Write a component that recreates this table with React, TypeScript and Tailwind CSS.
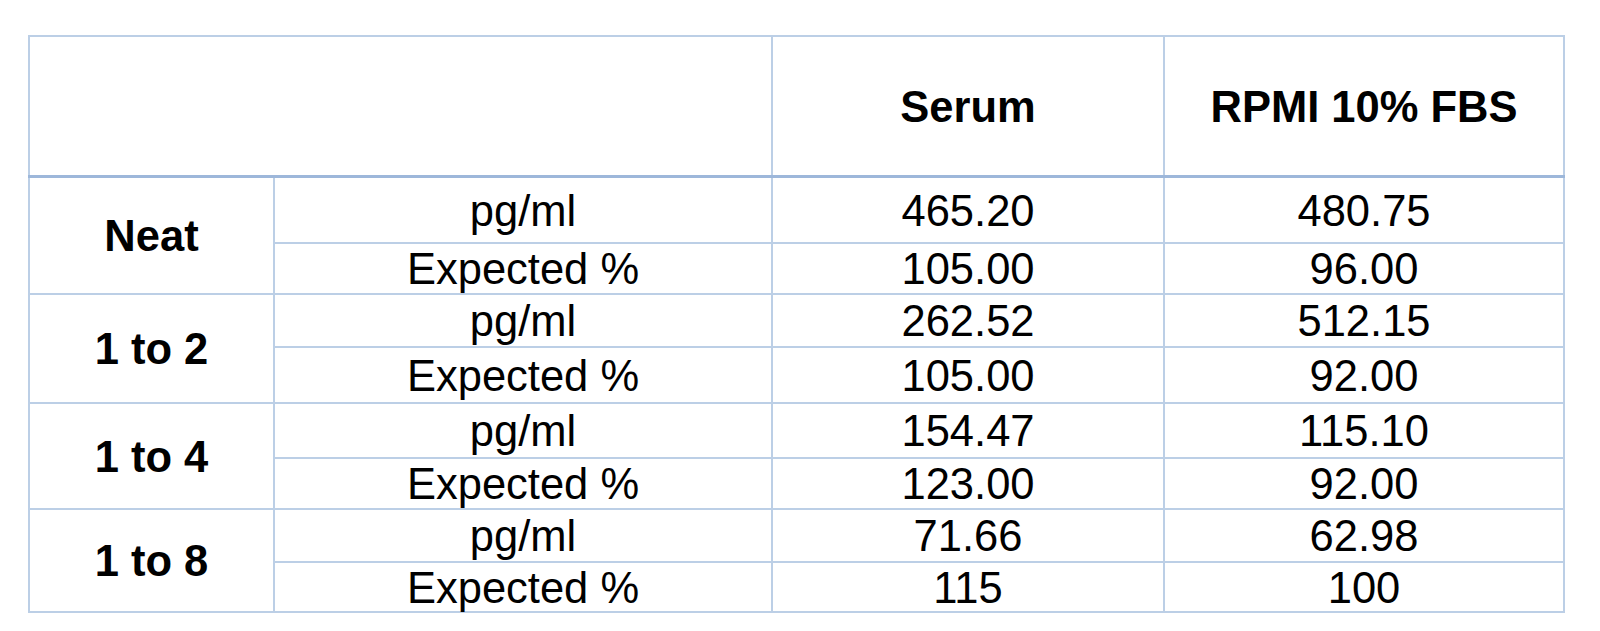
const rows = [
  { label: 'Neat', items: [['pg/ml', '465.20', '480.75', 67], ['Expected %', '105.00', '96.00', 51]] },
  { label: '1 to 2', items: [['pg/ml', '262.52', '512.15', 53], ['Expected %', '105.00', '92.00', 56]] },
  { label: '1 to 4', items: [['pg/ml', '154.47', '115.10', 55], ['Expected %', '123.00', '92.00', 51]] },
  { label: '1 to 8', items: [['pg/ml', '71.66', '62.98', 53], ['Expected %', '115', '100', 50]] },
] as const;

const cell = 'border-2 border-[#bccfe6] text-center align-middle p-0 pt-[3px] leading-none';

export default function App() {
  return (
    <div className="w-[1600px] h-[631px] bg-white pl-[28px] pt-[35px] font-['Liberation_Sans',Arial,sans-serif] text-[43.5px] text-black">
      <table className="table-fixed border-collapse w-[1535px]">
        <colgroup>
          <col className="w-[245px]" />
          <col className="w-[498px]" />
          <col className="w-[392px]" />
          <col className="w-[400px]" />
        </colgroup>
        <thead>
          <tr className="h-[140px]">
            <th colSpan={2} className={`${cell} border-b-[3px] border-b-[#9db7da]`}></th>
            <th className={`${cell} border-b-[3px] border-b-[#9db7da] font-bold`}>Serum</th>
            <th className={`${cell} border-b-[3px] border-b-[#9db7da] font-bold`}>RPMI 10% FBS</th>
          </tr>
        </thead>
        <tbody>
          {rows.map((g) =>
            g.items.map((r, i) => (
              <tr key={g.label + i} style={{ height: r[3] }}>
                {i === 0 && (
                  <td rowSpan={2} className={`${cell} font-bold`}>
                    {g.label}
                  </td>
                )}
                <td className={cell}>{r[0]}</td>
                <td className={cell}>{r[1]}</td>
                <td className={cell}>{r[2]}</td>
              </tr>
            ))
          )}
        </tbody>
      </table>
    </div>
  );
}
